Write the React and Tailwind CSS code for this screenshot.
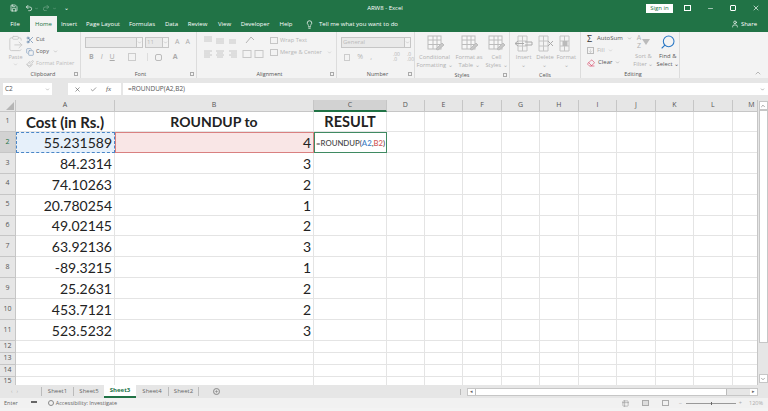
import React from "react";
import { Save, Undo2, Redo2, Lightbulb, User, Scissors, Copy, Paintbrush, ClipboardPaste, X, Check, ChevronDown, ChevronUp, Search, Eraser, ArrowDown, Plus, Minus, Table2 } from "lucide-react";

const tabs = [
  ["Insert", "w-[24px]"],
  ["Page Layout", "w-[44px]"],
  ["Formulas", "w-[34px]"],
  ["Data", "w-[25px]"],
  ["Review", "w-[27px]"],
  ["View", "w-[27px]"],
  ["Developer", "w-[34px]"],
  ["Help", "w-[28px]"],
];

const rows = [
  ["55.231589", "4"],
  ["84.2314", "3"],
  ["74.10263", "2"],
  ["20.780254", "1"],
  ["49.02145", "2"],
  ["63.92136", "3"],
  ["-89.3215", "1"],
  ["25.2631", "2"],
  ["453.7121", "2"],
  ["523.5232", "3"],
];

const restCols = ["E", "F", "G", "H", "I", "J", "K", "L", "M"];

const GroupLabel = ({ children, launcher }) => (
  <div className="relative mt-auto h-[10px] text-center text-[5.500px] leading-[12px] text-[#555]">
    {children}
    {launcher && <span className="absolute right-[2px] top-[4px] h-[4px] w-[4px] border border-[#aaa]" />}
  </div>
);

const BigButton = ({ lines, icon, className = "" }) => (
  <div className={`flex flex-col items-center text-center text-[5.800px] leading-[8px] text-[#b0b0b0] ${className}`}>
    <div className="flex h-[18px] items-center">{icon}</div>
    <div className="mt-[1px]">{lines[0]}</div>
    <div>{lines[1]}</div>
  </div>
);

const GridIcon = ({ accent }) => (
  <svg width="20" height="16" viewBox="0 0 20 16" fill="none" stroke="#bcbcbc" strokeWidth="1">
    <rect x="3" y="1" width="13" height="13" fill="#f7f7f7" />
    <path d="M3 5h13M3 9.500h13M8 1v13M12 1v13" />
    {accent && <path d="M11 14l6-6 2 2-6 5z" fill="#c8c8c8" />}
  </svg>
);

const CellsIcon = ({ mark }) => (
  <svg width="20" height="17" viewBox="0 0 20 17" fill="none" stroke="#c4c4c4" strokeWidth="1">
    <path d="M4 1h9v15H4zM4 6h9M4 11h9M8.500 1v15" />
    {mark === "x" && <path d="M13 6l5 5M18 6l-5 5" stroke="#aaa" />}
    {mark === "in" && <path d="M1 8.500h9M4 6L1 8.500 4 11M11 7h7v3h-7" stroke="#aaa" />}
    {mark === "f" && <rect x="6.500" y="6" width="5" height="5" fill="#bbb" stroke="none" />}
  </svg>
);

function Ribbon() {
  return (
    <div className="flex h-[46px] bg-[#f3f3f3] pl-[6px]">
      {/* Clipboard */}
      <div className="flex w-[75px] flex-col border-r border-[#dcdcdc]">
        <div className="flex pt-[3px]">
          <div className="flex w-[19px] flex-col items-center text-[5.500px] leading-[7px] text-[#b5b5b5]">
            <ClipboardPaste size={17} strokeWidth={1.2} className="text-[#c6c6c6]" />
            <span className="mt-[2px]">Paste</span>
            <ChevronDown size={5} className="mt-[1px]" />
          </div>
          <div className="ml-[1px] flex flex-col gap-[3px] text-[5.500px] leading-[9px]">
            <div className="flex items-center gap-[2px] text-[#555]"><Scissors size={8} className="text-[#5a7fa8]" />Cut</div>
            <div className="flex items-center gap-[2px] text-[#555]"><Copy size={8} className="text-[#7d9cbc]" />Copy<ChevronDown size={5} className="ml-[2px] text-[#999]" /></div>
            <div className="flex items-center gap-[2px] text-[#bdbdbd]"><Paintbrush size={8} />Format Painter</div>
          </div>
        </div>
        <GroupLabel launcher>Clipboard</GroupLabel>
      </div>

      {/* Font */}
      <div className="flex w-[116px] flex-col border-r border-[#dcdcdc] pl-[4px]">
        <div className="flex items-center pt-[5px]">
          <div className="flex h-[11px] w-[58px] justify-end border border-[#c6c6c6] bg-[#e9e9e9]"><span className="flex w-[6px] items-center border-l border-[#c6c6c6] bg-[#f3f3f3]"><ChevronDown size={5} className="text-[#aaa]" /></span></div>
          <div className="ml-[2px] flex h-[11px] w-[24px] items-center justify-between border border-[#c6c6c6] bg-[#e9e9e9] pl-[1px] text-[6px] text-[#bbb]">11<span className="flex h-full w-[6px] items-center border-l border-[#c6c6c6] bg-[#f3f3f3]"><ChevronDown size={5} className="text-[#aaa]" /></span></div>
          <span className="ml-[6px] text-[7px] text-[#aaa]">A</span>
          <span className="ml-[6px] text-[7px] text-[#aaa]">A</span>
        </div>
        <div className="mt-[4px] flex items-center gap-[7px] pl-[4px] text-[7px] leading-[10px] text-[#aaa]">
          <b>B</b><i>I</i><u>U</u>
          <span className="ml-[6px] h-[8px] w-[8px] border border-[#ccc]" />
          <span className="ml-[4px] h-[8px] w-[1px] bg-[#ddd]" />
          <span className="h-[7px] w-[7px] rounded-[2px] border border-[#bbb]" />
          <span className="ml-[4px] font-bold">A</span>
        </div>
        <GroupLabel launcher>Font</GroupLabel>
      </div>

      {/* Alignment */}
      <div className="flex w-[140px] flex-col border-r border-[#dcdcdc] pl-[6px]">
        <div className="flex pt-[4px]">
          <div className="flex w-[64px] flex-col gap-[6px]">
            <svg width="62" height="8" viewBox="0 0 62 8" fill="none" stroke="#c8c8c8"><path d="M1 1h8M1 3h8M1 5h8M13 3h8M13 5h8M13 7h8M26 4h7M26 6h7M26 8h7" /><path d="M43 7l5-6 3 3" stroke="#b5b5b5" /></svg>
            <svg width="62" height="8" viewBox="0 0 62 8" fill="none" stroke="#c8c8c8"><path d="M1 1h8M1 3h6M1 5h8M1 7h6M13 1h8M14 3h6M13 5h8M14 7h6M26 1h8M28 3h6M26 5h8M28 7h6" /><rect x="40" y=".5" width="8" height="7" /><rect x="52" y=".5" width="8" height="7" /></svg>
          </div>
          <div className="ml-[3px] flex flex-col gap-[3px] text-[5.700px] leading-[9px] text-[#b5b5b5]">
            <div className="flex items-center gap-[2px]"><span className="h-[7px] w-[8px] border border-[#c6c6c6]" />Wrap Text</div>
            <div className="flex items-center gap-[2px]"><span className="h-[7px] w-[8px] border border-[#c6c6c6]" />Merge &amp; Center<ChevronDown size={5} className="ml-[3px]" /></div>
          </div>
        </div>
        <GroupLabel launcher>Alignment</GroupLabel>
      </div>

      {/* Number */}
      <div className="flex w-[78px] flex-col border-r border-[#dcdcdc] pl-[4px]">
        <div className="mt-[5px] flex h-[11px] w-[70px] items-center justify-between border border-[#c6c6c6] bg-[#e9e9e9] pl-[1px] text-[6px] text-[#bbb]">General<span className="flex h-full w-[6px] items-center border-l border-[#c6c6c6] bg-[#f3f3f3]"><ChevronDown size={5} className="text-[#aaa]" /></span></div>
        <div className="mt-[4px] flex items-center gap-[7px] pl-[3px] text-[7px] leading-[10px] text-[#b5b5b5]">
          <span className="h-[7px] w-[8px] border border-[#ccc]" />
          <span>%</span><span>,</span>
          <span className="ml-[14px] text-[5px] leading-[5px]">.00<br />.0</span>
          <span className="text-[5px] leading-[5px]">.0<br />.00</span>
        </div>
        <GroupLabel launcher>Number</GroupLabel>
      </div>

      {/* Styles */}
      <div className="flex w-[95px] flex-col border-r border-[#dcdcdc]">
        <div className="flex justify-around pt-[2px]">
          <BigButton lines={["Conditional", "Formatting ⌄"]} icon={<GridIcon accent />} />
          <BigButton lines={["Format as", "Table ⌄"]} icon={<GridIcon accent />} />
          <BigButton lines={["Cell", "Styles ⌄"]} icon={<GridIcon accent />} />
        </div>
        <GroupLabel launcher>Styles</GroupLabel>
      </div>

      {/* Cells */}
      <div className="flex w-[71px] flex-col border-r border-[#dcdcdc]">
        <div className="flex justify-around px-[3px] pt-[2px]">
          <BigButton lines={["Insert", "⌄"]} icon={<CellsIcon mark="in" />} />
          <BigButton lines={["Delete", "⌄"]} icon={<CellsIcon mark="x" />} />
          <BigButton lines={["Format", "⌄"]} icon={<CellsIcon mark="f" />} />
        </div>
        <GroupLabel>Cells</GroupLabel>
      </div>

      {/* Editing */}
      <div className="flex w-[99px] flex-col border-r border-[#dcdcdc] pl-[6px]">
        <div className="flex pt-[1px]">
          <div className="flex w-[46px] flex-col gap-[3px] pt-[1px] text-[6px] leading-[9px]">
            <div className="flex items-center gap-[3px] text-[#555]"><span className="w-[7px] text-[9px] leading-[9px] text-[#333]">Σ</span>AutoSum<ChevronDown size={5} className="ml-[1px] text-[#888]" /></div>
            <div className="flex items-center gap-[3px] text-[#b5b5b5]"><span className="flex h-[7px] w-[7px] items-center border border-[#bbb]"><ArrowDown size={6} /></span>Fill<ChevronDown size={5} /></div>
            <div className="flex items-center gap-[3px] text-[#555]"><Eraser size={8} className="text-[#d9486a]" />Clear<ChevronDown size={5} className="text-[#888]" /></div>
          </div>
          <div className="ml-[1px] flex flex-col items-center text-center text-[5.800px] leading-[8px] text-[#b0b0b0]">
            <div className="flex h-[18px] items-center gap-[1px]">
              <div className="flex flex-col text-[7px] leading-[8px]"><span>A</span><span>Z</span></div>
              <span className="h-0 w-0 border-x-[4px] border-t-[6px] border-x-transparent border-t-[#bbb]" />
            </div>
            <div className="mt-[1px]">Sort &amp;</div>
            <div>Filter ⌄</div>
          </div>
          <div className="ml-[3px] flex flex-col items-center text-center text-[5.800px] leading-[8px] text-[#555]">
            <div className="flex h-[18px] items-center"><Search size={16} strokeWidth={1.6} className="-scale-x-100 text-[#2b78c5]" /></div>
            <div className="mt-[1px]">Find &amp;</div>
            <div>Select ⌄</div>
          </div>
        </div>
        <GroupLabel>Editing</GroupLabel>
      </div>

      <div className="flex flex-1 items-end justify-end pb-[1px] pr-[6px]">
        <ChevronUp size={8} className="text-[#999]" />
      </div>
    </div>
  );
}

export default function App() {
  return (
    <div className="flex h-[411px] w-[768px] flex-col overflow-hidden whitespace-nowrap bg-[#e6e6e6] font-['Open_Sans',sans-serif]">
      {/* title bar */}
      <div className="flex h-[16px] items-center bg-[#217346] text-white">
        <div className="flex flex-1 items-center pl-[10px]">
          <Save size={8} />
          <Undo2 size={8} className="ml-[7px]" />
          <ChevronDown size={5} className="ml-[1px] opacity-50" />
          <Redo2 size={8} className="ml-[3px] opacity-40" />
          <ChevronDown size={5} className="ml-[2px] opacity-50" />
          <span className="ml-[7px] text-[6px] leading-[6px]">⌄</span>
        </div>
        <span className="text-[6px]">ARW8 - Excel</span>
        <div className="flex flex-1 items-center justify-end pr-[8px]">
          <span className="w-[27px] bg-white text-center text-[6px] leading-[9px] text-[#217346]">Sign in</span>
          <span className="ml-[11px] h-[6px] w-[7px] border border-white" />
          <Minus size={7} className="ml-[16px]" />
          <span className="ml-[16px] h-[6px] w-[6px] rounded-[1px] border border-white" />
          <X size={8} className="ml-[16px]" />
        </div>
      </div>

      {/* tabs */}
      <div className="flex h-[16px] items-center bg-[#217346] pr-[11px] text-center text-[6px] text-white">
        <span className="w-[30px]">File</span>
        <span className="h-full w-[27px] bg-[#f3f3f3] leading-[16px] text-[#217346]">Home</span>
        {tabs.map(([name, width]) => (
          <span key={name} className={width}>{name}</span>
        ))}
        <Lightbulb size={9} className="ml-[5px]" />
        <span className="ml-[5px]">Tell me what you want to do</span>
        <User size={8} className="ml-auto" />
        <span className="ml-[2px]">Share</span>
      </div>

      <Ribbon />

      {/* formula bar */}
      <div className="mt-[5px] flex h-[12px] items-stretch text-[6.500px] text-[#555]">
        <div className="ml-[3px] flex w-[49px] items-center justify-between bg-white px-[2px]">C2<ChevronDown size={5} className="text-[#777]" /></div>
        <div className="ml-[16px] flex w-[53px] items-center gap-[9px] bg-white pl-[6px]">
          <X size={7} /><Check size={7} /><i className="font-['Liberation_Serif',serif] text-[7px]">fx</i>
        </div>
        <div className="ml-[2px] flex flex-1 items-center justify-between bg-white pl-[5px] pr-[3px]">=ROUNDUP(A2,B2)<ChevronDown size={5} /></div>
      </div>

      {/* sheet */}
      <div className="mt-[5px] flex h-[285px]">
        <div className="w-[757px] overflow-hidden bg-white font-['Lato',sans-serif]">
          <div className="grid grid-cols-[16px_99px_199px_73px_37.7px_repeat(9,38.5px)] grid-rows-[12px_20px_repeat(10,20.900px)_repeat(3,12px)_10px] text-[#222]">
            {/* column headers */}
            <div className="relative border-b border-r border-[#c6c6c6] bg-[#e6e6e6]">
              <span className="absolute bottom-[1px] right-[1px] h-0 w-0 border-b-[8px] border-l-[8px] border-b-[#b5b5b5] border-l-transparent" />
            </div>
            {["A", "B", "C", "D", ...restCols].map((col) => (
              <div
                key={col}
                className={`flex items-center justify-center border-r font-['Open_Sans',sans-serif] text-[7px] text-[#555] ${
                  col === "C" ? "border-b-2 border-b-[#217346] border-r-[#c6c6c6] bg-[#d2d2d2]" : "border-b border-[#c6c6c6] bg-[#e6e6e6]"
                }`}
              >
                {col}
              </div>
            ))}

            {/* row 1 */}
            <div className="flex items-center justify-center border-b border-r border-[#c6c6c6] bg-[#e6e6e6] font-['Open_Sans',sans-serif] text-[7px] text-[#555]">1</div>
            <div className="flex items-end justify-center border-b border-r border-[#e4e4e4] text-[15px] font-bold leading-[18px]">Cost (in Rs.)</div>
            <div className="flex items-end justify-center border-b border-r border-[#e4e4e4] text-[14px] font-bold leading-[18px]">ROUNDUP to</div>
            <div className="flex items-end justify-center border-b border-r border-[#e4e4e4] text-[14.500px] font-bold leading-[18px]">RESULT</div>
            {["D", ...restCols].map((col) => (
              <div key={col} className="border-b border-r border-[#e4e4e4]" />
            ))}

            {/* data rows */}
            {rows.map(([cost, digits], i) => (
              <React.Fragment key={cost}>
                <div className={`flex items-center justify-center border-b border-r border-[#c6c6c6] font-['Open_Sans',sans-serif] text-[7px] text-[#555] ${i === 0 ? "bg-[#d2d2d2] text-[#217346]" : "bg-[#e6e6e6]"}`}>
                  {i + 2}
                </div>
                <div className={`flex items-end justify-end pr-[2px] text-[14px] leading-[19px] ${i === 0 ? "border border-dashed border-[#4a86c8] bg-[#e6f0fa]" : "border-b border-r border-[#e4e4e4]"}`}>
                  {cost}
                </div>
                <div className={`flex items-end justify-end pr-[2px] text-[14px] leading-[19px] ${i === 0 ? "border border-[#d98080] bg-[#f9e6e6]" : "border-b border-r border-[#e4e4e4]"}`}>
                  {digits}
                </div>
                {i === 0 ? (
                  <div className="relative z-10 flex items-center border-[1.500px] border-[#3f8a62] pl-[1px] pt-[3px] text-[7.800px] font-medium text-[#444]">
                    =ROUNDUP(<span className="text-[#3a7cc4]">A2</span>,<span className="text-[#d05a5a]">B2</span>)
                    <span className="ml-[1px] h-[10px] w-[1px] bg-[#333]" />
                  </div>
                ) : (
                  <div className="border-b border-r border-[#e4e4e4]" />
                )}
                {["D", ...restCols].map((col) => (
                  <div key={col} className="border-b border-r border-[#e4e4e4]" />
                ))}
              </React.Fragment>
            ))}

            {/* empty rows */}
            {[12, 13, 14, 15].map((n) => (
              <React.Fragment key={n}>
                <div className="flex items-center justify-center border-b border-r border-[#c6c6c6] bg-[#e6e6e6] font-['Open_Sans',sans-serif] text-[7px] text-[#555]">{n}</div>
                {["A", "B", "C", "D", ...restCols].map((col) => (
                  <div key={col} className="border-b border-r border-[#e4e4e4]" />
                ))}
              </React.Fragment>
            ))}
          </div>
        </div>

        {/* vertical scrollbar */}
        <div className="flex w-[11px] flex-col items-center border-l border-[#c6c6c6] bg-[#e6e6e6] pt-[1px]">
          <div className="flex h-[9px] w-[9px] items-center justify-center border border-[#c6c6c6] bg-white"><ChevronUp size={6} className="text-[#555]" /></div>
          <div className="h-[233px] w-[9px] border border-[#c6c6c6] bg-white" />
          <div className="mb-[2px] mt-auto flex h-[9px] w-[9px] items-center justify-center border border-[#c6c6c6] bg-white"><ChevronDown size={6} className="text-[#555]" /></div>
        </div>
      </div>

      {/* sheet tabs */}
      <div className="flex h-[13px] items-center text-[6px] text-[#666]">
        <span className="ml-[11px] w-[30px] text-[5px] text-[#aaa]">‹ &nbsp; ›</span>
        <span className="w-[32px] border-l border-[#bbb] text-center">Sheet1</span>
        <span className="w-[31px] border-l border-[#bbb] text-center">Sheet5</span>
        <span className="flex h-full w-[32px] items-center justify-center border-b-2 border-[#217346] bg-white font-bold text-[#217346]">Sheet3</span>
        <span className="w-[32px] text-center">Sheet4</span>
        <span className="w-[31px] border-x border-[#bbb] text-center">Sheet2</span>
        <span className="ml-[14px] flex h-[7px] w-[7px] items-center justify-center rounded-full border border-[#888]"><Plus size={5} /></span>
        <span className="ml-[240px] h-[6px] w-[1px] bg-[#bbb]" />
        <div className="ml-[6px] flex h-[8px] w-[291px] items-center border border-[#c6c6c6]">
          <span className="flex h-full w-[7px] items-center justify-center bg-white text-[5px]">◂</span>
          <span className="h-full w-[252px] border-x border-[#bbb] bg-white" />
          <span className="ml-auto flex h-full w-[7px] items-center justify-center bg-white text-[5px]">▸</span>
        </div>
      </div>

      {/* status bar */}
      <div className="flex h-[10px] items-center bg-[#f1f1f1] pr-[5px] text-[5.500px] text-[#666]">
        <span className="ml-[4px]">Enter</span>
        <span className="ml-[13px] h-[5px] w-[6px] border-t-2 border-[#666]" />
        <span className="ml-[11px] h-[6px] w-[6px] rounded-full border border-[#888]" />
        <span className="ml-[2px]">Accessibility: Investigate</span>
        <Table2 size={7} className="ml-auto text-[#999]" />
        <span className="ml-[13px] h-[6px] w-[7px] border border-[#aaa] bg-[#ddd]" />
        <span className="ml-[13px] h-[6px] w-[7px] border border-[#aaa]" />
        <span className="ml-[10px] text-[#aaa]">−</span>
        <span className="relative ml-[4px] h-[1px] w-[50px] bg-[#999]"><span className="absolute left-[25px] top-[-1px] h-[3px] w-[1px] bg-[#666]" /></span>
        <span className="ml-[3px] text-[#aaa]">+</span>
        <span className="ml-[7px] text-[#aaa]">120%</span>
      </div>
      <div className="flex-1 bg-[#f3f3f3]" />
    </div>
  );
}
